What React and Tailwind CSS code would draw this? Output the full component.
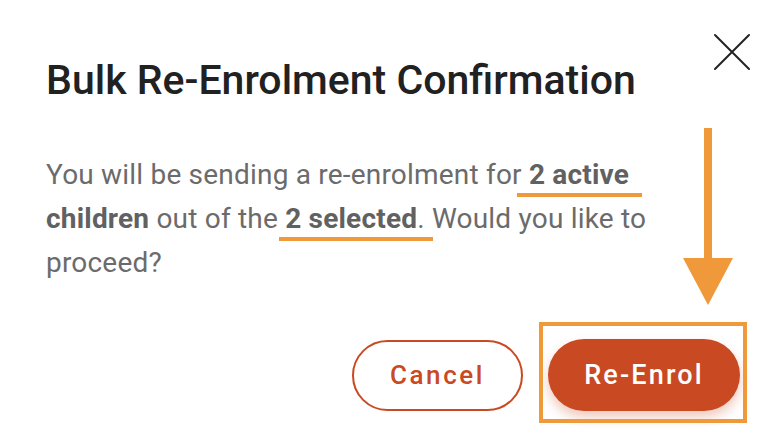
import React from 'react';

// orange marker line under a bold phrase (annotation overlay)
const Highlight = ({ children, lineClass }) => (
    <span className="relative font-bold text-[#616161]">
        {children}
        <span className={`absolute top-[35px] h-[4px] bg-[#f0993a] ${lineClass}`}></span>
    </span>
);

const ReEnrolDialog = () => {
    return (
        <div className="relative w-[775px] h-[434px] bg-white overflow-hidden font-['Roboto',sans-serif] pl-[46px] pr-[23px] pt-[32px]">
            {/* Header */}
            <div className="flex justify-between items-start">
                <h2 className="mt-[24px] text-[41px] leading-[48px] font-medium text-[#212121]">
                    Bulk Re-Enrolment Confirmation
                </h2>
                <button className="w-[40px] h-[40px] flex items-center justify-center">
                    <svg width="38" height="38" viewBox="0 0 38 38" fill="none" stroke="#222" strokeWidth="2" strokeLinecap="round">
                        <path d="M2 2 L36 36 M36 2 L2 36" />
                    </svg>
                </button>
            </div>

            {/* Body */}
            <p className="mt-[49px] w-[620px] text-[28px] leading-[44px] tracking-[0.2px] text-[#6b6b6b]">
                You will be sending a re-enrolment for{' '}
                <Highlight lineClass="left-[-12px] right-[-13px]">2 active</Highlight>{' '}
                <span className="font-bold text-[#616161]">children</span> out of the{' '}
                <Highlight lineClass="left-[-6px] right-[-16px]">2 selected</Highlight>. Would you like to proceed?
            </p>

            {/* Actions */}
            <div className="mt-[54px] pr-[12px] flex justify-end items-center gap-[25px]">
                <button className="w-[171px] h-[71px] rounded-full border-2 border-[#c94a22] text-[#c94a22] text-[26px] font-medium tracking-[0.1em] bg-white">
                    Cancel
                </button>
                <div className="relative">
                    <button className="w-[192px] h-[72px] rounded-full bg-[#c94a22] text-white text-[27px] font-medium tracking-[0.08em] shadow-[0_6px_12px_rgba(201,74,34,0.3)]">
                        Re-Enrol
                    </button>
                    {/* annotation frame */}
                    <div className="absolute left-[-9px] top-[-17px] w-[208px] h-[101px] border-[4px] border-[#f0993a] pointer-events-none"></div>
                </div>
            </div>

            {/* Annotation arrow */}
            <div className="absolute left-[683px] top-[128px] flex flex-col items-center w-[50px] pointer-events-none">
                <div className="w-[8px] h-[130px] bg-[#f0993a]"></div>
                <div className="w-0 h-0 border-l-[25px] border-r-[25px] border-t-[47px] border-l-transparent border-r-transparent border-t-[#f0993a]"></div>
            </div>
        </div>
    );
};

export default function App() {
    return <ReEnrolDialog />;
}
